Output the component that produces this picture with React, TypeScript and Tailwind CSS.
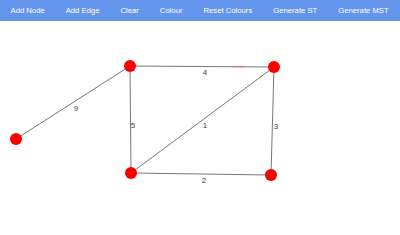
import React from "react";

const nodes: Record<string, [number, number]> = {
  A: [16, 139],
  B: [130, 66],
  C: [274, 67],
  D: [131, 173],
  E: [271, 175],
};

const edges: [string, string, string, number, number][] = [
  ["A", "B", "9", 76, 108],
  ["B", "D", "5", 133, 125],
  ["B", "C", "4", 205, 72],
  ["C", "D", "1", 205, 125.5],
  ["C", "E", "3", 276, 126],
  ["D", "E", "2", 204, 180],
];

const links = ["Add Node", "Add Edge", "Clear", "Colour", "Reset Colours", "Generate ST", "Generate MST"];

export default function App() {
  return (
    <div className="w-[400px] h-[235px] bg-white overflow-hidden" style={{ fontFamily: '"Liberation Sans", Arial, sans-serif' }}>
      <nav className="flex items-center h-[21px] bg-[#6495ed]">
        {links.map((l) => (
          <span key={l} className="px-[10.5px] text-[7.7px] leading-none text-white whitespace-nowrap">
            {l}
          </span>
        ))}
      </nav>
      <svg width={400} height={214} viewBox="0 21 400 214" className="block">
        {edges.map(([a, b]) => (
          <line
            key={a + b}
            x1={nodes[a][0]}
            y1={nodes[a][1]}
            x2={nodes[b][0]}
            y2={nodes[b][1]}
            stroke="#555"
            strokeWidth={0.8}
          />
        ))}
        <line x1={232} y1={66.6} x2={244} y2={66.7} stroke="#e55" strokeWidth={0.8} />
        {edges.map(([a, b, w, x, y]) => (
          <text
            key={"t" + a + b}
            x={x}
            y={y}
            textAnchor="middle"
            dominantBaseline="central"
            fontSize={8}
            fill="#444"
            fontFamily='"Liberation Sans", Arial, sans-serif'
          >
            {w}
          </text>
        ))}
        {Object.entries(nodes).map(([k, [x, y]]) => (
          <circle key={k} cx={x} cy={y} r={6} fill="#f00" />
        ))}
      </svg>
    </div>
  );
}
